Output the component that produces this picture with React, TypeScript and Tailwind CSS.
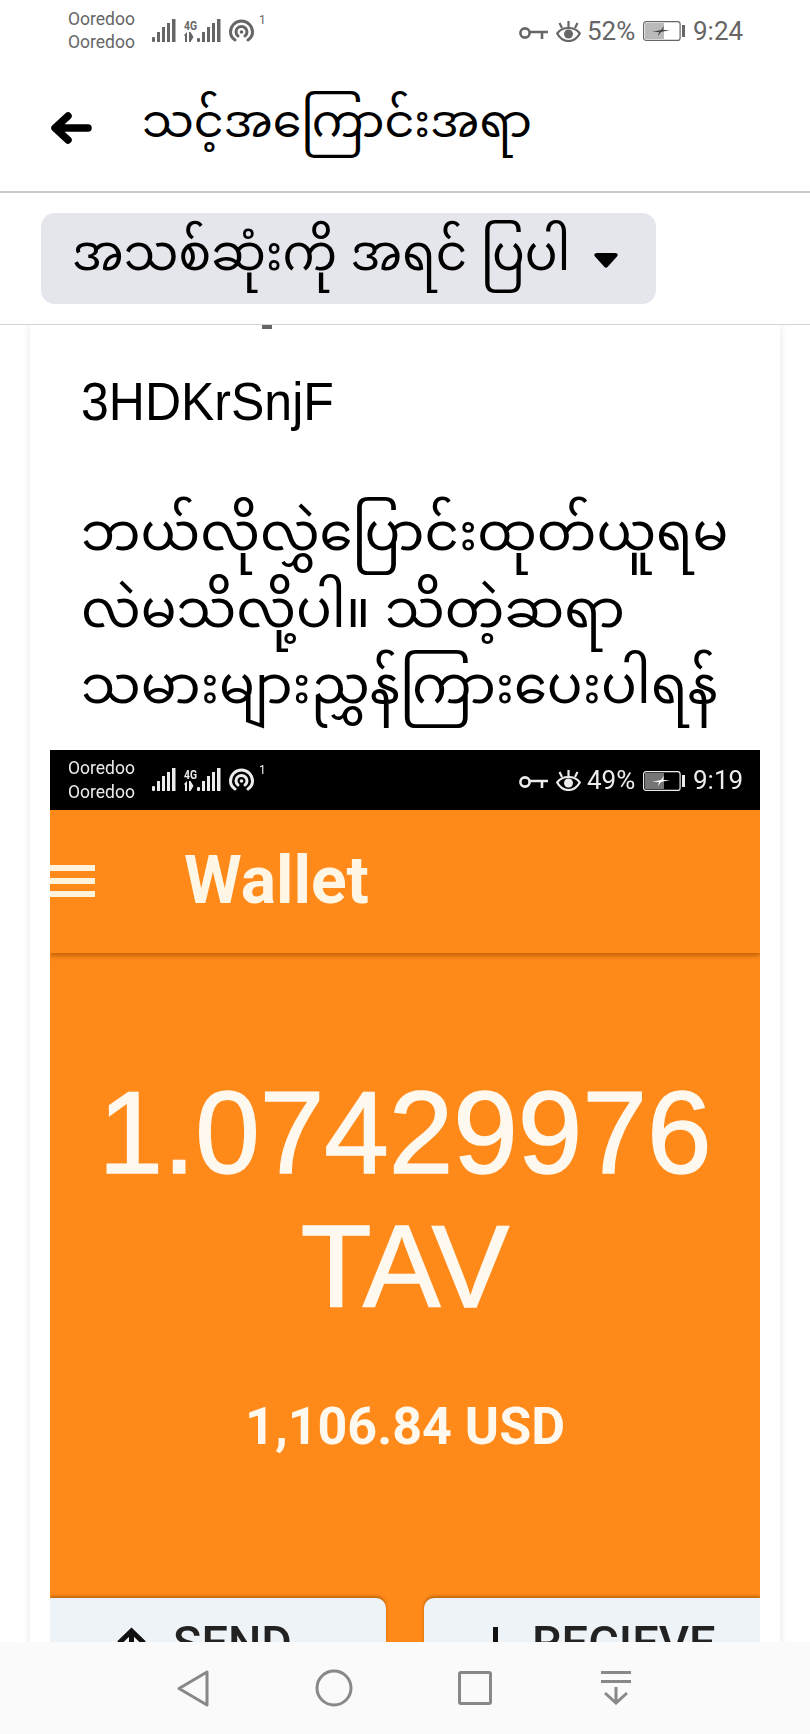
import React from "react";

const Signal = ({ className = "" }: { className?: string }) => (
  <svg viewBox="0 0 24 23" className={className} fill="currentColor">
    <rect x="0" y="18" width="3" height="5" rx="1" />
    <rect x="5" y="13" width="3" height="10" />
    <rect x="10" y="8" width="3" height="15" />
    <rect x="15" y="4" width="3" height="19" />
    <rect x="20" y="0" width="3.500" height="23" />
  </svg>
);

const Signal4G = ({ className = "" }: { className?: string }) => (
  <svg viewBox="0 0 37 23" className={className} fill="currentColor">
    <text x="0" y="10.500" fontSize="12" fontWeight="700" fontFamily="Roboto" textLength="13" lengthAdjust="spacingAndGlyphs">4G</text>
    <path d="M0 16l3-3v10H1v-6zM5 13h1.500l3 5-3 5H5z" />
    <rect x="13" y="19" width="3" height="4" rx="1" />
    <rect x="18" y="13" width="3" height="10" />
    <rect x="23" y="8" width="3" height="15" />
    <rect x="28" y="4" width="3" height="19" />
    <rect x="33" y="0" width="3.500" height="23" />
  </svg>
);

const Hotspot = ({ className = "" }: { className?: string }) => (
  <svg viewBox="0 0 25 23" className={className} fill="none" stroke="currentColor" strokeWidth="3" strokeLinecap="round">
    <path d="M6 21C3 19 1.500 16 1.500 13a11 11 0 0 1 22 0c0 3-1.500 6-4.500 8" />
    <path d="M9 17c-1-1-2-2.500-2-4a5.500 5.500 0 0 1 11 0c0 1.500-1 3-2 4" />
    <circle cx="12.500" cy="13" r="1.800" fill="currentColor" stroke="none" />
  </svg>
);

const Key = ({ className = "" }: { className?: string }) => (
  <svg viewBox="0 0 29 12" className={className} fill="none" stroke="currentColor" strokeWidth="2.600">
    <circle cx="6" cy="6" r="4.600" />
    <path d="M11 5h18M23 5v7" />
  </svg>
);

const Eye = ({ className = "" }: { className?: string }) => (
  <svg viewBox="0 0 25 21" className={className} fill="none" stroke="currentColor" strokeWidth="2.200">
    <path d="M1.200 12.500C4 8.500 8 7 12.500 7s8.500 1.500 11.300 5.500C21 17.500 17 20 12.500 20S4 17.500 1.200 12.500z" />
    <circle cx="12.500" cy="13" r="4.500" fill="currentColor" stroke="none" />
    <path d="M12.500 6V0M6 7L3.500 2M19 7l2.500-5" />
  </svg>
);

const Battery = ({ className = "", light = false }: { className?: string; light?: boolean }) => (
  <svg viewBox="0 0 42 20" className={className} fill="none" stroke="currentColor">
    <rect x="0.600" y="0.600" width="36.500" height="18.800" rx="2.500" strokeWidth="1.200" />
    <rect x="2" y="2" width="19" height="16" fill="currentColor" stroke="none" opacity={light ? 0.5 : 0.45} />
    <path d="M9 11l9-2 3-4-1 4 7 0-9 2-3 4 1-4z" fill={light ? "#ffffff" : "#444444"} stroke="none" />
    <rect x="39" y="4" width="3" height="12" fill="currentColor" stroke="none" />
  </svg>
);

const StatusBar = ({ pct, time, dark = false }: { pct: string; time: string; dark?: boolean }) => (
  <div className={`flex h-[60px] items-center justify-between font-['Roboto',sans-serif] ${dark ? "text-[#ececec] blur-[0.4px]" : "text-[#666666]"}`}>
    <div className="flex items-center">
      <div className="flex w-[84px] flex-col pt-[2px] text-[17.5px] leading-[23.500px]">
        <span>Ooredoo</span>
        <span>Ooredoo</span>
      </div>
      <div className="flex items-center gap-[8px]">
        <Signal className="h-[23px] w-[24px]" />
        <Signal4G className="h-[23px] w-[37px]" />
        <Hotspot className="h-[23px] w-[25px]" />
      </div>
      <span className="mb-[20px] ml-[5px] text-[12px] leading-none">1</span>
    </div>
    <div className={`flex items-center pt-[2px] text-[26px] ${dark ? "mr-[17px]" : "mr-[67px]"}`}>
      <Key className="mt-[3px] h-[12px] w-[29px]" />
      <Eye className="ml-[8px] h-[21px] w-[25px]" />
      <span className="ml-[6px] w-[48px]">{pct}</span>
      <Battery light={dark} className="ml-[8px] h-[20px] w-[42px]" />
      <span className="ml-[8px] w-[50px]">{time}</span>
    </div>
  </div>
);

export default function App() {
  return (
    <div className="flex h-[1734px] w-[810px] flex-col overflow-hidden bg-white font-['Liberation_Sans','Noto_Sans_Myanmar','Padauk','Noto_Sans',sans-serif]">
      <div className="shrink-0 pl-[68px]">
        <StatusBar pct="52%" time="9:24" />
      </div>
      <header className="flex h-[133px] shrink-0 items-center border-b-2 border-[#c9cacc] pt-[5px] pl-[50px]">
        <svg viewBox="0 0 42 32" className="h-[32px] w-[42px]" fill="none" stroke="#000" strokeWidth="7.500" strokeLinecap="round" strokeLinejoin="round">
          <path d="M38 16H6M18 4L5 16l13 12" />
        </svg>
        <h1 className="ml-[50px] mt-[-14px] text-[46px] font-normal leading-none text-black">သင့်အကြောင်းအရာ</h1>
      </header>
      <div className="flex h-[132px] shrink-0 items-start border-b border-[#d5d5d5] pl-[41px] pt-[20px]">
        <div className="flex h-[91px] w-[615px] items-center rounded-[14px] bg-[#e4e6eb] pl-[31px]">
          <span className="mt-[-10px] text-[48.500px] leading-none text-black">အသစ်ဆုံးကို အရင် ပြပါ</span>
          <svg viewBox="0 0 24 15" className="ml-[24px] mt-[4px] h-[15px] w-[24px]" fill="#000">
            <path d="M3 0h18c2.500 0 3.500 2 2 3.500L13.500 14c-.8.900-2.200.900-3 0L1 3.500C-.5 2 .5 0 3 0z" />
          </svg>
        </div>
      </div>
      <main className="min-h-0 flex-1 overflow-hidden px-[30px]">
        <div className="bg-white shadow-[0_0_8px_rgba(0,0,0,0.10)]">
          <div className="ml-[232px] h-[4px] w-[10px] bg-[#666666]" />
          <p className="mt-[44px] origin-left scale-y-[1.09] pl-[51px] text-[50px] leading-[56px] text-black">3HDKrSnjF</p>
          <p className="mt-[65px] pl-[51px] text-[53px] leading-[76.5px] text-black">
            ဘယ်လိုလွှဲပြောင်းထုတ်ယူရမ
            <br />
            လဲမသိလို့ပါ။ သိတဲ့ဆရာ
            <br />
            သမားများညွှန်ကြားပေးပါရန်
          </p>
          <div className="mx-[20px] mt-[26px] h-[1000px] overflow-hidden bg-[#ff8a1a]">
            <div className="bg-black pl-[18px]">
              <StatusBar pct="49%" time="9:19" dark />
            </div>
            <div className="relative flex h-[143px] items-center bg-[#ff8a1a] shadow-[0_3px_4px_rgba(170,85,0,0.7)]">
              <div className="flex w-[45px] flex-col gap-[7px] blur-[0.5px]">
                <span className="h-[6px] bg-[#fff3dc]" />
                <span className="h-[6px] bg-[#fff3dc]" />
                <span className="h-[6px] bg-[#fff3dc]" />
              </div>
              <span className="ml-[89px] font-['Roboto',sans-serif] text-[66px] font-bold leading-none text-[#fff6e6] blur-[0.5px]">Wallet</span>
            </div>
            <div className="flex flex-col items-center pt-[113px] text-[#fff8ee] blur-[0.6px]">
              <span className="text-[116px] leading-[134px] [-webkit-text-stroke:1.500px_#fff8ee]">1.07429976</span>
              <span className="text-[116px] leading-[134px] [-webkit-text-stroke:1.500px_#fff8ee]">TAV</span>
              <span className="mt-[61px] font-['Roboto',sans-serif] text-[52px] font-bold leading-[64px]">1,106.84 USD</span>
            </div>
            <div className="mt-[139px] flex justify-between">
              <div className="flex h-[120px] w-[336px] items-start gap-[26px] rounded-tr-[10px] bg-[#eef3f8] pl-[66px] pt-[21px] font-['Roboto',sans-serif] text-[47px] font-medium leading-none text-[#222222] shadow-[0_-2px_3px_rgba(150,80,0,0.6)] blur-[0.4px]">
                <svg viewBox="0 0 31 34" className="mt-[8px] h-[34px] w-[31px]" fill="none" stroke="#111111" strokeWidth="5">
                  <path d="M15.500 34V4M3 16L15.500 4 28 16" />
                </svg>
                <span>SEND</span>
              </div>
              <div className="flex h-[120px] w-[336px] items-start gap-[21px] rounded-tl-[10px] bg-[#eef3f8] pl-[56px] pt-[21px] font-['Roboto',sans-serif] text-[47px] font-medium leading-none text-[#222222] shadow-[0_-2px_3px_rgba(150,80,0,0.6)] blur-[0.4px]">
                <svg viewBox="0 0 31 34" className="mt-[8px] h-[34px] w-[31px]" fill="none" stroke="#111111" strokeWidth="5">
                  <path d="M15.500 0V30M3 18l12.500 12L28 18" />
                </svg>
                <span>RECIEVE</span>
              </div>
            </div>
          </div>
        </div>
      </main>
      <nav className="flex h-[92px] shrink-0 items-center bg-[#fafafa] pl-[177px] text-[#888888]">
        <svg viewBox="0 0 32 37" className="h-[37px] w-[32px]" fill="none" stroke="currentColor" strokeWidth="3" strokeLinejoin="round">
          <path d="M30 2v33L2 18.500z" />
        </svg>
        <svg viewBox="0 0 38 38" className="ml-[106px] h-[38px] w-[38px]" fill="none" stroke="currentColor" strokeWidth="3">
          <circle cx="19" cy="19" r="17" />
        </svg>
        <svg viewBox="0 0 34 34" className="ml-[105px] h-[34px] w-[34px]" fill="none" stroke="currentColor" strokeWidth="3" strokeLinejoin="round">
          <rect x="1.500" y="1.500" width="31" height="31" rx="1.500" />
        </svg>
        <svg viewBox="0 0 30 34" className="ml-[109px] h-[34px] w-[30px]" fill="none" stroke="currentColor" strokeWidth="3">
          <path d="M0 1.500h30M0 10.500h30M15 16v16M4 22l11 10 11-10" />
        </svg>
      </nav>
    </div>
  );
}
